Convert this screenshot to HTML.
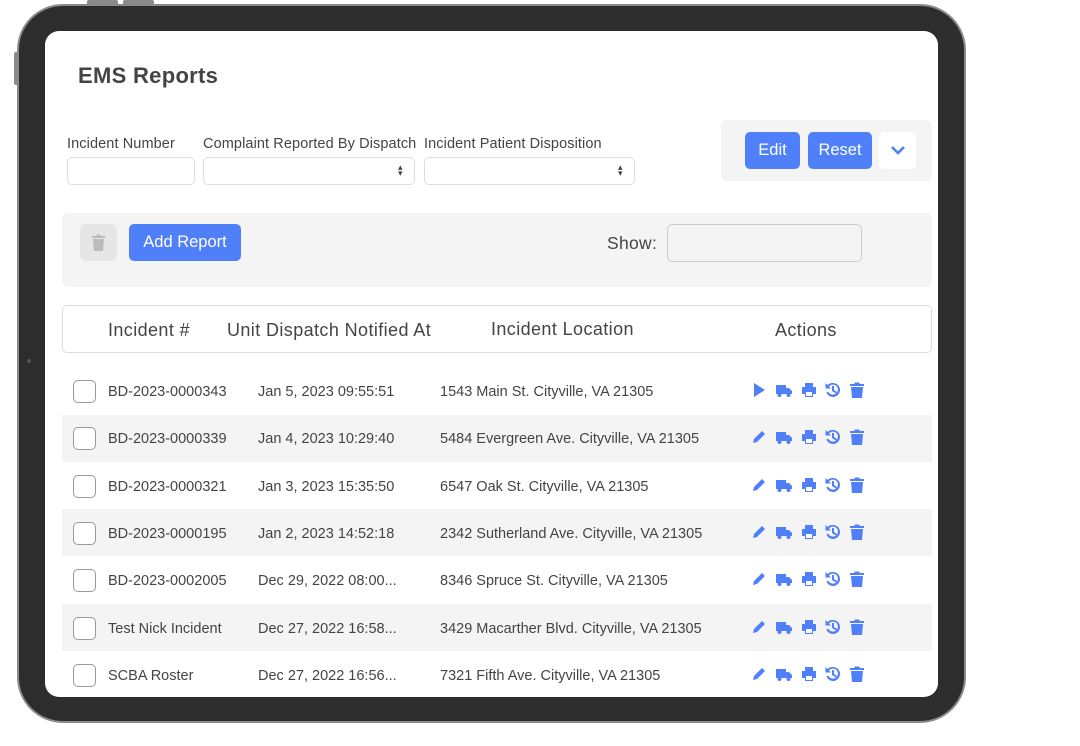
<!DOCTYPE html>
<html><head><meta charset="utf-8"><style>
*{box-sizing:border-box;margin:0;padding:0}
body{width:1080px;height:746px;background:#fff;position:relative;overflow:hidden;font-family:"Liberation Sans",sans-serif;color:#444}
.a{position:absolute}
.frame{left:17px;top:4px;width:949px;height:719px;background:#2d2d2d;border:2px solid #8a8a8a;border-radius:46px}
.screen{left:45px;top:31px;width:893px;height:666px;background:#fff;border-radius:14px;overflow:hidden}
.lbl{font-size:14.5px;color:#444;letter-spacing:0.1px}
.inp{background:#fff;border:1px solid #ddd;border-radius:5px}
.btn{background:#4f7ff9;color:#fff;border-radius:5px;font-size:16.5px;text-align:center}
.row{left:62px;width:870px;height:47px}
.row.s{background:#f4f4f4}
.cb{left:73px;width:23px;height:23px;border:1.5px solid #999;border-radius:5px;background:#fff}
.t{font-size:14.5px;color:#444;white-space:nowrap}
.th{font-size:18px;color:#444;white-space:nowrap;letter-spacing:0.4px}
svg.i{position:absolute;width:16px;height:16px;fill:#4f7ff9}
</style></head><body>
<div class="a" style="left:87px;top:0;width:31px;height:6px;background:#8a8a8a;border-radius:2px"></div>
<div class="a" style="left:123px;top:0;width:31px;height:6px;background:#8a8a8a;border-radius:2px"></div>
<div class="a" style="left:14px;top:52px;width:5px;height:33px;background:#8a8a8a;border-radius:2px"></div>
<div class="a frame"></div>
<div class="a" style="left:27px;top:359px;width:4px;height:4px;border-radius:50%;background:#555"></div>
<div class="a screen"></div>

<div class="a" style="left:78px;top:63px;font-size:22px;font-weight:bold;color:#444;letter-spacing:0.3px">EMS Reports</div>

<div class="a lbl" style="left:67px;top:136px">Incident Number</div>
<div class="a inp" style="left:67px;top:157px;width:128px;height:28px"></div>
<div class="a lbl" style="left:203px;top:136px">Complaint Reported By Dispatch</div>
<div class="a inp" style="left:203px;top:157px;width:212px;height:28px"></div>
<div class="a" style="left:398px;top:164px;font-size:9px;line-height:6px;color:#444">▴<br>▾</div>
<div class="a lbl" style="left:424px;top:136px">Incident Patient Disposition</div>
<div class="a inp" style="left:424px;top:157px;width:211px;height:28px"></div>
<div class="a" style="left:618px;top:164px;font-size:9px;line-height:6px;color:#444">▴<br>▾</div>

<div class="a" style="left:721px;top:120px;width:211px;height:61px;background:#f4f4f4;border-radius:6px"></div>
<div class="a btn" style="left:745px;top:132px;width:55px;height:37px;line-height:37px">Edit</div>
<div class="a btn" style="left:808px;top:132px;width:64px;height:37px;line-height:37px">Reset</div>
<div class="a" style="left:879px;top:132px;width:37px;height:37px;background:#fff;border-radius:5px"></div>
<svg class="a" style="left:890px;top:145px" width="16" height="10" viewBox="0 0 16 10"><path d="M2 2l6 6 6-6" stroke="#4f7ff9" stroke-width="2.6" fill="none"/></svg>

<div class="a" style="left:62px;top:213px;width:870px;height:74px;background:#f4f4f4;border-radius:6px"></div>
<div class="a" style="left:80px;top:224px;width:37px;height:37px;background:#e6e6e6;border-radius:6px"></div>
<svg class="a" style="left:91px;top:234px" width="15" height="17" viewBox="0 0 15 17"><path d="M1 2h4l1-1.5h3L10 2h4v2H1z M2 5h11l-1 12H3z" fill="#bbb"/></svg>
<div class="a btn" style="left:129px;top:224px;width:112px;height:37px;line-height:37px">Add Report</div>
<div class="a" style="left:607px;top:233px;font-size:17.5px;color:#444;letter-spacing:0.3px">Show:</div>
<div class="a inp" style="left:667px;top:224px;width:195px;height:38px;border-color:#ccc;background:#f4f4f4"></div>

<div class="a" style="left:62px;top:305px;width:870px;height:48px;border:1px solid #ddd;border-radius:5px;background:#fff"></div>
<div class="a th" style="left:108px;top:320px">Incident #</div>
<div class="a th" style="left:227px;top:320px">Unit Dispatch Notified At</div>
<div class="a th" style="left:491px;top:319px">Incident Location</div>
<div class="a th" style="left:775px;top:320px">Actions</div>

<div id="rows"></div>
<script>
var d=[["BD-2023-0000343","Jan 5, 2023 09:55:51","1543 Main St. Cityville, VA 21305"],
["BD-2023-0000339","Jan 4, 2023 10:29:40","5484 Evergreen Ave. Cityville, VA 21305"],
["BD-2023-0000321","Jan 3, 2023 15:35:50","6547 Oak St. Cityville, VA 21305"],
["BD-2023-0000195","Jan 2, 2023 14:52:18","2342 Sutherland Ave. Cityville, VA 21305"],
["BD-2023-0002005","Dec 29, 2022 08:00...","8346 Spruce St. Cityville, VA 21305"],
["Test Nick Incident","Dec 27, 2022 16:58...","3429 Macarther Blvd. Cityville, VA 21305"],
["SCBA Roster","Dec 27, 2022 16:56...","7321 Fifth Ave. Cityville, VA 21305"]];
var play='<path d="M3 1l11 7-11 7z"/>',pen='<path d="M2 14l1-4 8-8 3 3-8 8z"/>';
var truck='<path d="M0 3h10v9H0z M10 6h3l3 3v3h-6z"/><circle cx="3.5" cy="13" r="2" /><circle cx="12.5" cy="13" r="2"/>';
var prn='<path d="M4 1h8v4H4z M1 5h14v7h-3v3H4v-3H1z" /><path d="M5 10h6v4H5z" fill="#fff"/>';
var hist='<path d="M8 1a7 7 0 1 1-6.6 9.3l2-.6A5 5 0 1 0 4 4.5L6 6.5H0.5V1l2 2A7 7 0 0 1 8 1z M7 4h2v4l3 2-1 1.5-4-2.5z"/>';
var tr='<path d="M1 2h4l1-1.5h4L11 2h4v2H1z M2 5h12l-1 11H3z"/>';
var h='';
for(var k=0;k<7;k++){var y=368+k*47.3;
h+='<div class="a row'+(k%2?' s':'')+'" style="top:'+(y-0.5)+'px"></div>';
h+='<div class="a cb" style="top:'+(y+12)+'px"></div>';
h+='<div class="a t" style="left:108px;top:'+(y+16)+'px">'+d[k][0]+'</div>';
h+='<div class="a t" style="left:258px;top:'+(y+16)+'px">'+d[k][1]+'</div>';
h+='<div class="a t" style="left:440px;top:'+(y+16)+'px">'+d[k][2]+'</div>';
var ic=[k?pen:play,truck,prn,hist,tr],xs=[751,776,801,825,849];
for(var j=0;j<5;j++)h+='<svg class="i" viewBox="0 0 16 16" style="left:'+xs[j]+'px;top:'+(y+14)+'px">'+ic[j]+'</svg>';}
document.getElementById('rows').innerHTML=h;
</script>
</body></html>
